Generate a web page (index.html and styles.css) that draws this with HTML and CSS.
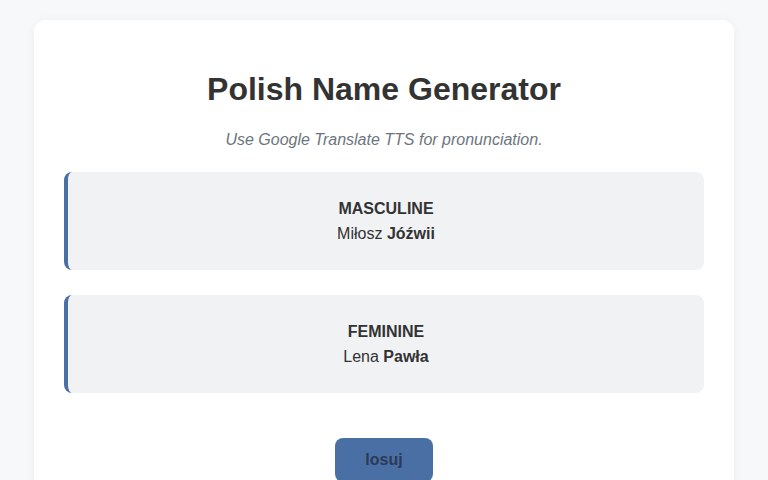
FILE: index.html
```html
<!DOCTYPE html>
<html lang="pl">
<head>
<meta charset="utf-8">
<title>Polish Name Generator</title>
<link rel="stylesheet" href="styles.css">
</head>
<body>
<main class="card">
  <h1 class="title">Polish Name Generator</h1>
  <p class="subtitle">Use Google Translate TTS for pronunciation.</p>
  <section class="name-box">
    <div class="label">MASCULINE</div>
    <div class="name">Miłosz <strong>Jóźwii</strong></div>
  </section>
  <section class="name-box">
    <div class="label">FEMININE</div>
    <div class="name">Lena <strong>Pawła</strong></div>
  </section>
  <div class="actions">
    <button class="btn" type="button">losuj</button>
  </div>
</main>
</body>
</html>
```
FILE: styles.css
```css
html, body {
  margin: 0;
  padding: 0;
}
body {
  background: #f7f8fa;
  font-family: "Liberation Sans", Arial, sans-serif;
  color: #333333;
  padding: 20px 34px;
}
.card {
  background: #ffffff;
  border-radius: 12px;
  box-shadow: 0 2px 12px rgba(0, 0, 0, 0.05);
  padding: 50px 30px 30px;
  text-align: center;
}
.title {
  margin: 0 0 20px;
  font-size: 32px;
  line-height: 38px;
  font-weight: bold;
  color: #333333;
}
.subtitle {
  margin: 0 0 20px;
  font-size: 16px;
  line-height: 24px;
  font-style: italic;
  color: #6c757d;
}
.name-box {
  background: #f1f2f4;
  border-left: 4px solid #4a6fa5;
  border-radius: 8px;
  padding: 24px;
  margin-bottom: 25px;
  font-size: 16px;
  line-height: 25px;
  color: #333333;
}
.label {
  font-weight: bold;
}
.actions {
  padding-top: 20px;
}
.btn {
  background: #4a6fa5;
  color: #2b3b57;
  border: none;
  border-radius: 8px;
  padding: 10px 30px;
  font-family: "Liberation Sans", Arial, sans-serif;
  font-size: 16px;
  line-height: 24px;
  font-weight: bold;
  cursor: pointer;
}
```
